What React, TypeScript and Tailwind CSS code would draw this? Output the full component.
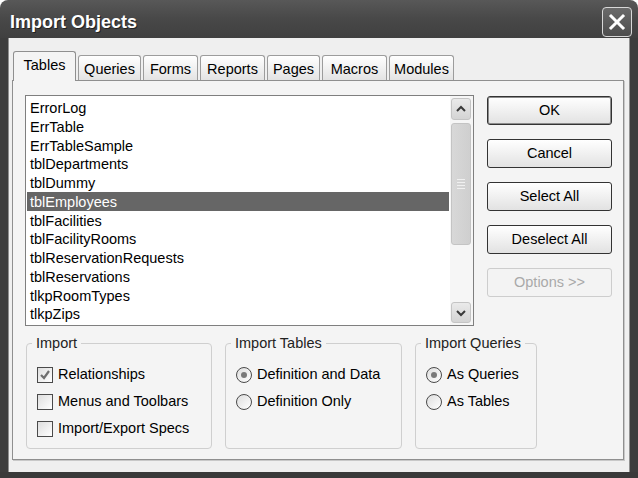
import React from "react"

const tabs = [
  { label: "Tables", w: "w-[63px]" },
  { label: "Queries", w: "w-[63px]" },
  { label: "Forms", w: "w-[55px]" },
  { label: "Reports", w: "w-[65px]" },
  { label: "Pages", w: "w-[53px]" },
  { label: "Macros", w: "w-[65px]" },
  { label: "Modules", w: "w-[65px]" },
]

const tables = [
  "ErrorLog",
  "ErrTable",
  "ErrTableSample",
  "tblDepartments",
  "tblDummy",
  "tblEmployees",
  "tblFacilities",
  "tblFacilityRooms",
  "tblReservationRequests",
  "tblReservations",
  "tlkpRoomTypes",
  "tlkpZips",
]

function Checkbox({ label, checked }: { label: string; checked?: boolean }) {
  return (
    <div className="flex items-center h-[16px]">
      <div className="w-[16px] h-[16px] border border-[#4a4a4a] bg-gradient-to-br from-[#dedede] to-white flex items-center justify-center">
        {checked && (
          <svg width="12" height="12" viewBox="0 0 12 12">
            <polyline points="2,6 5,9 10,2" fill="none" stroke="#6e6e6e" strokeWidth="2.2" />
          </svg>
        )}
      </div>
      <span className="ml-[5px]">{label}</span>
    </div>
  )
}

function Radio({ label, checked }: { label: string; checked?: boolean }) {
  return (
    <div className="flex items-center h-[16px]">
      <div className="w-[16px] h-[16px] rounded-full border border-[#4a4a4a] bg-gradient-to-br from-[#dedede] to-white flex items-center justify-center">
        {checked && <div className="w-[6px] h-[6px] rounded-full bg-[#7a7a7a]" />}
      </div>
      <span className="ml-[5px]">{label}</span>
    </div>
  )
}

function Button({ label, isDefault, disabled }: { label: string; isDefault?: boolean; disabled?: boolean }) {
  if (disabled) {
    return (
      <div className="h-[29px] rounded-[3px] border border-[#cdcdcd] bg-[#f3f3f3] flex items-center justify-center pt-[1px] text-[#a9a9a9]">
        {label}
      </div>
    )
  }
  return (
    <div
      className={`h-[29px] rounded-[3px] border border-[#333] bg-gradient-to-b from-white to-[#e2e2e2] flex items-center justify-center pt-[1px] ${
        isDefault ? "shadow-[inset_0_0_0_1px_#8c8c8c]" : ""
      }`}
    >
      {label}
    </div>
  )
}

export default function App() {
  return (
    <div className="w-[638px] h-[478px] bg-white flex flex-col font-['Liberation_Sans',Arial,sans-serif] text-[14.5px] text-black">
      {/* title bar */}
      <div className="h-[38px] shrink-0 rounded-t-[8px] bg-gradient-to-b from-[#585858] via-[#484848] to-[#404040] flex justify-between pl-[10px] pr-[6px]">
        <span className="mt-[10px] text-white font-bold text-[18px] leading-[24px] [text-shadow:1px_1px_0_#222]">
          Import Objects
        </span>
        <div className="mt-[7px] w-[30px] h-[30px] rounded-[4px] border border-[#d8d8d8] bg-gradient-to-b from-[#6a6a6a] to-[#4e4e4e] flex items-center justify-center">
          <svg width="18" height="18" viewBox="0 0 18 18">
            <path d="M3 3 L15 15 M15 3 L3 15" stroke="white" strokeWidth="3" strokeLinecap="square" />
          </svg>
        </div>
      </div>

      <div className="flex-1 flex min-h-0">
        <div className="w-[9px] bg-[#3d3d3d] border-r border-[#8f8f8f]" />

        {/* body */}
        <div className="flex-1 bg-[#efefef] pt-[13px] pl-[3px] pr-[5px] pb-[12px] flex flex-col">
          <div className="flex items-end gap-[2px] pl-[1px] -mb-[1px] relative z-10">
            {tabs.map((t, i) =>
              i === 0 ? (
                <div
                  key={t.label}
                  className={`${t.w} h-[30px] rounded-t-[3px] border border-b-0 border-[#8f8f8f] bg-[#f4f4f4] flex items-center justify-center pb-[1px]`}
                >
                  {t.label}
                </div>
              ) : (
                <div
                  key={t.label}
                  className={`${t.w} h-[25px] mb-[1px] rounded-t-[3px] border border-b-0 border-[#9c9c9c] bg-gradient-to-b from-white to-[#e3e3e3] flex items-center justify-center pt-[3px]`}
                >
                  {t.label}
                </div>
              )
            )}
          </div>

          {/* tab panel */}
          <div className="flex-1 border border-[#8f8f8f] bg-[#f4f4f4] shadow-[1px_1px_0_#c8c8c8] pl-[12px] pt-[14px] flex flex-col">
            <div className="flex">
              {/* list box */}
              <div className="w-[449px] h-[231px] border border-[#7f7f7f] bg-white flex">
                <div className="flex-1 pt-[2px] px-[1px]">
                  {tables.map((name) => (
                    <div
                      key={name}
                      className={`h-[18.75px] leading-[18.75px] pl-[3px] ${
                        name === "tblEmployees" ? "bg-[#666666] text-white" : ""
                      }`}
                    >
                      <span className="relative top-[1px]">{name}</span>
                    </div>
                  ))}
                </div>
                <div className="w-[23px] bg-[#f6f6f6] pt-[2px] pb-[2px] pl-[1px] pr-[2px] flex flex-col">
                  <div className="h-[22px] rounded-[3px] border border-[#c4c4c4] bg-gradient-to-b from-[#eaeaea] to-[#d4d4d4] flex items-center justify-center">
                    <svg width="10" height="8" viewBox="0 0 10 8">
                      <polyline points="1,6 5,2 9,6" fill="none" stroke="#3a3a3a" strokeWidth="2" />
                    </svg>
                  </div>
                  <div className="mt-[3px] h-[122px] rounded-[3px] border border-[#c4c4c4] bg-gradient-to-r from-[#d8d8d8] to-[#cfcfcf] flex flex-col items-center justify-center gap-[2px]">
                    <div className="w-[8px] h-[1px] bg-[#f0f0f0]" />
                    <div className="w-[8px] h-[1px] bg-[#f0f0f0]" />
                    <div className="w-[8px] h-[1px] bg-[#f0f0f0]" />
                    <div className="w-[8px] h-[1px] bg-[#f0f0f0]" />
                  </div>
                  <div className="flex-1" />
                  <div className="h-[21px] rounded-[3px] border border-[#c4c4c4] bg-gradient-to-b from-[#eaeaea] to-[#d4d4d4] flex items-center justify-center">
                    <svg width="10" height="8" viewBox="0 0 10 8">
                      <polyline points="1,2 5,6 9,2" fill="none" stroke="#3a3a3a" strokeWidth="2" />
                    </svg>
                  </div>
                </div>
              </div>

              {/* buttons */}
              <div className="ml-[13px] w-[125px] pt-[1px] flex flex-col gap-[14px]">
                <Button label="OK" isDefault />
                <Button label="Cancel" />
                <Button label="Select All" />
                <Button label="Deselect All" />
                <Button label="Options >>" disabled />
              </div>
            </div>

            {/* option groups */}
            <div className="mt-[9px] pl-[1px] flex gap-[13px]">
              <fieldset className="w-[186px] h-[114px] border border-[#cfcfcf] rounded-[4px]">
                <legend className="ml-[5px] px-[4px] leading-[17px] text-[#222]">Import</legend>
                <div className="pl-[10px] pt-[15px] flex flex-col gap-[11px]">
                  <Checkbox label="Relationships" checked />
                  <Checkbox label="Menus and Toolbars" />
                  <Checkbox label="Import/Export Specs" />
                </div>
              </fieldset>
              <fieldset className="w-[177px] h-[114px] border border-[#cfcfcf] rounded-[4px]">
                <legend className="ml-[5px] px-[4px] leading-[17px] text-[#222]">Import Tables</legend>
                <div className="pl-[10px] pt-[15px] flex flex-col gap-[11px]">
                  <Radio label="Definition and Data" checked />
                  <Radio label="Definition Only" />
                </div>
              </fieldset>
              <fieldset className="w-[122px] h-[114px] border border-[#cfcfcf] rounded-[4px]">
                <legend className="ml-[5px] px-[4px] leading-[17px] text-[#222]">Import Queries</legend>
                <div className="pl-[10px] pt-[15px] flex flex-col gap-[11px]">
                  <Radio label="As Queries" checked />
                  <Radio label="As Tables" />
                </div>
              </fieldset>
            </div>
          </div>
        </div>

        <div className="w-[9px] bg-[#3d3d3d] border-l border-[#8f8f8f]" />
      </div>
      <div className="h-[6px] shrink-0 bg-[#3a3a3a]" />
    </div>
  )
}
